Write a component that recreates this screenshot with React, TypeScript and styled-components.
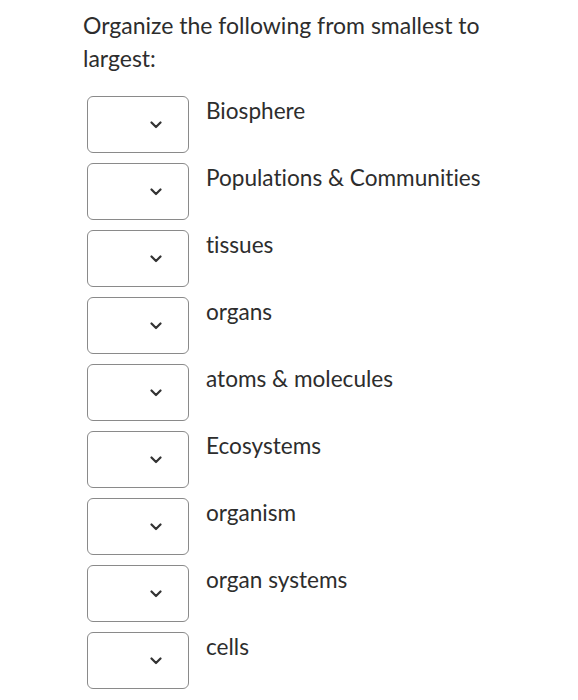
import styled, { createGlobalStyle } from "styled-components";

const GlobalStyle = createGlobalStyle`
  body {
    margin: 0;
    background: #ffffff;
    font-family: Lato, "Liberation Sans", sans-serif;
    font-variant-ligatures: none;
    color: #2d3b45;
  }
`;

const items = [
  "Biosphere",
  "Populations & Communities",
  "tissues",
  "organs",
  "atoms & molecules",
  "Ecosystems",
  "organism",
  "organ systems",
  "cells",
];

const Page = styled.div`
  padding: 9px 0 0 83px;
`;

const Question = styled.p`
  margin: 0 0 21px;
  width: 420px;
  font-size: 23px;
  line-height: 33px;
  color: #2d2d2d;
`;

const List = styled.div`
  display: flex;
  flex-direction: column;
  gap: 10px;
  padding-left: 4px;
`;

const Row = styled.div`
  display: flex;
  align-items: flex-start;
  gap: 17px;
`;

const Select = styled.div`
  box-sizing: border-box;
  width: 102px;
  height: 57px;
  border: 1px solid #8a8a8a;
  border-radius: 6px;
  display: flex;
  align-items: center;
  justify-content: flex-end;
  padding-right: 26px;
  background: #fff;
`;

const Label = styled.span`
  margin-top: 3px;
  font-size: 22.6px;
  line-height: 24px;
  color: #2d2d2d;
`;

const Chevron = () => (
  <svg width="12" height="8" viewBox="0 0 12 8">
    <path
      d="M1.5 1.5 L6 6 L10.5 1.5"
      fill="none"
      stroke="#333"
      strokeWidth="2.2"
      strokeLinecap="round"
      strokeLinejoin="round"
    />
  </svg>
);

export default function App() {
  return (
    <Page>
      <GlobalStyle />
      <Question>Organize the following from smallest to largest:</Question>
      <List>
        {items.map((item) => (
          <Row key={item}>
            <Select>
              <Chevron />
            </Select>
            <Label>{item}</Label>
          </Row>
        ))}
      </List>
    </Page>
  );
}
